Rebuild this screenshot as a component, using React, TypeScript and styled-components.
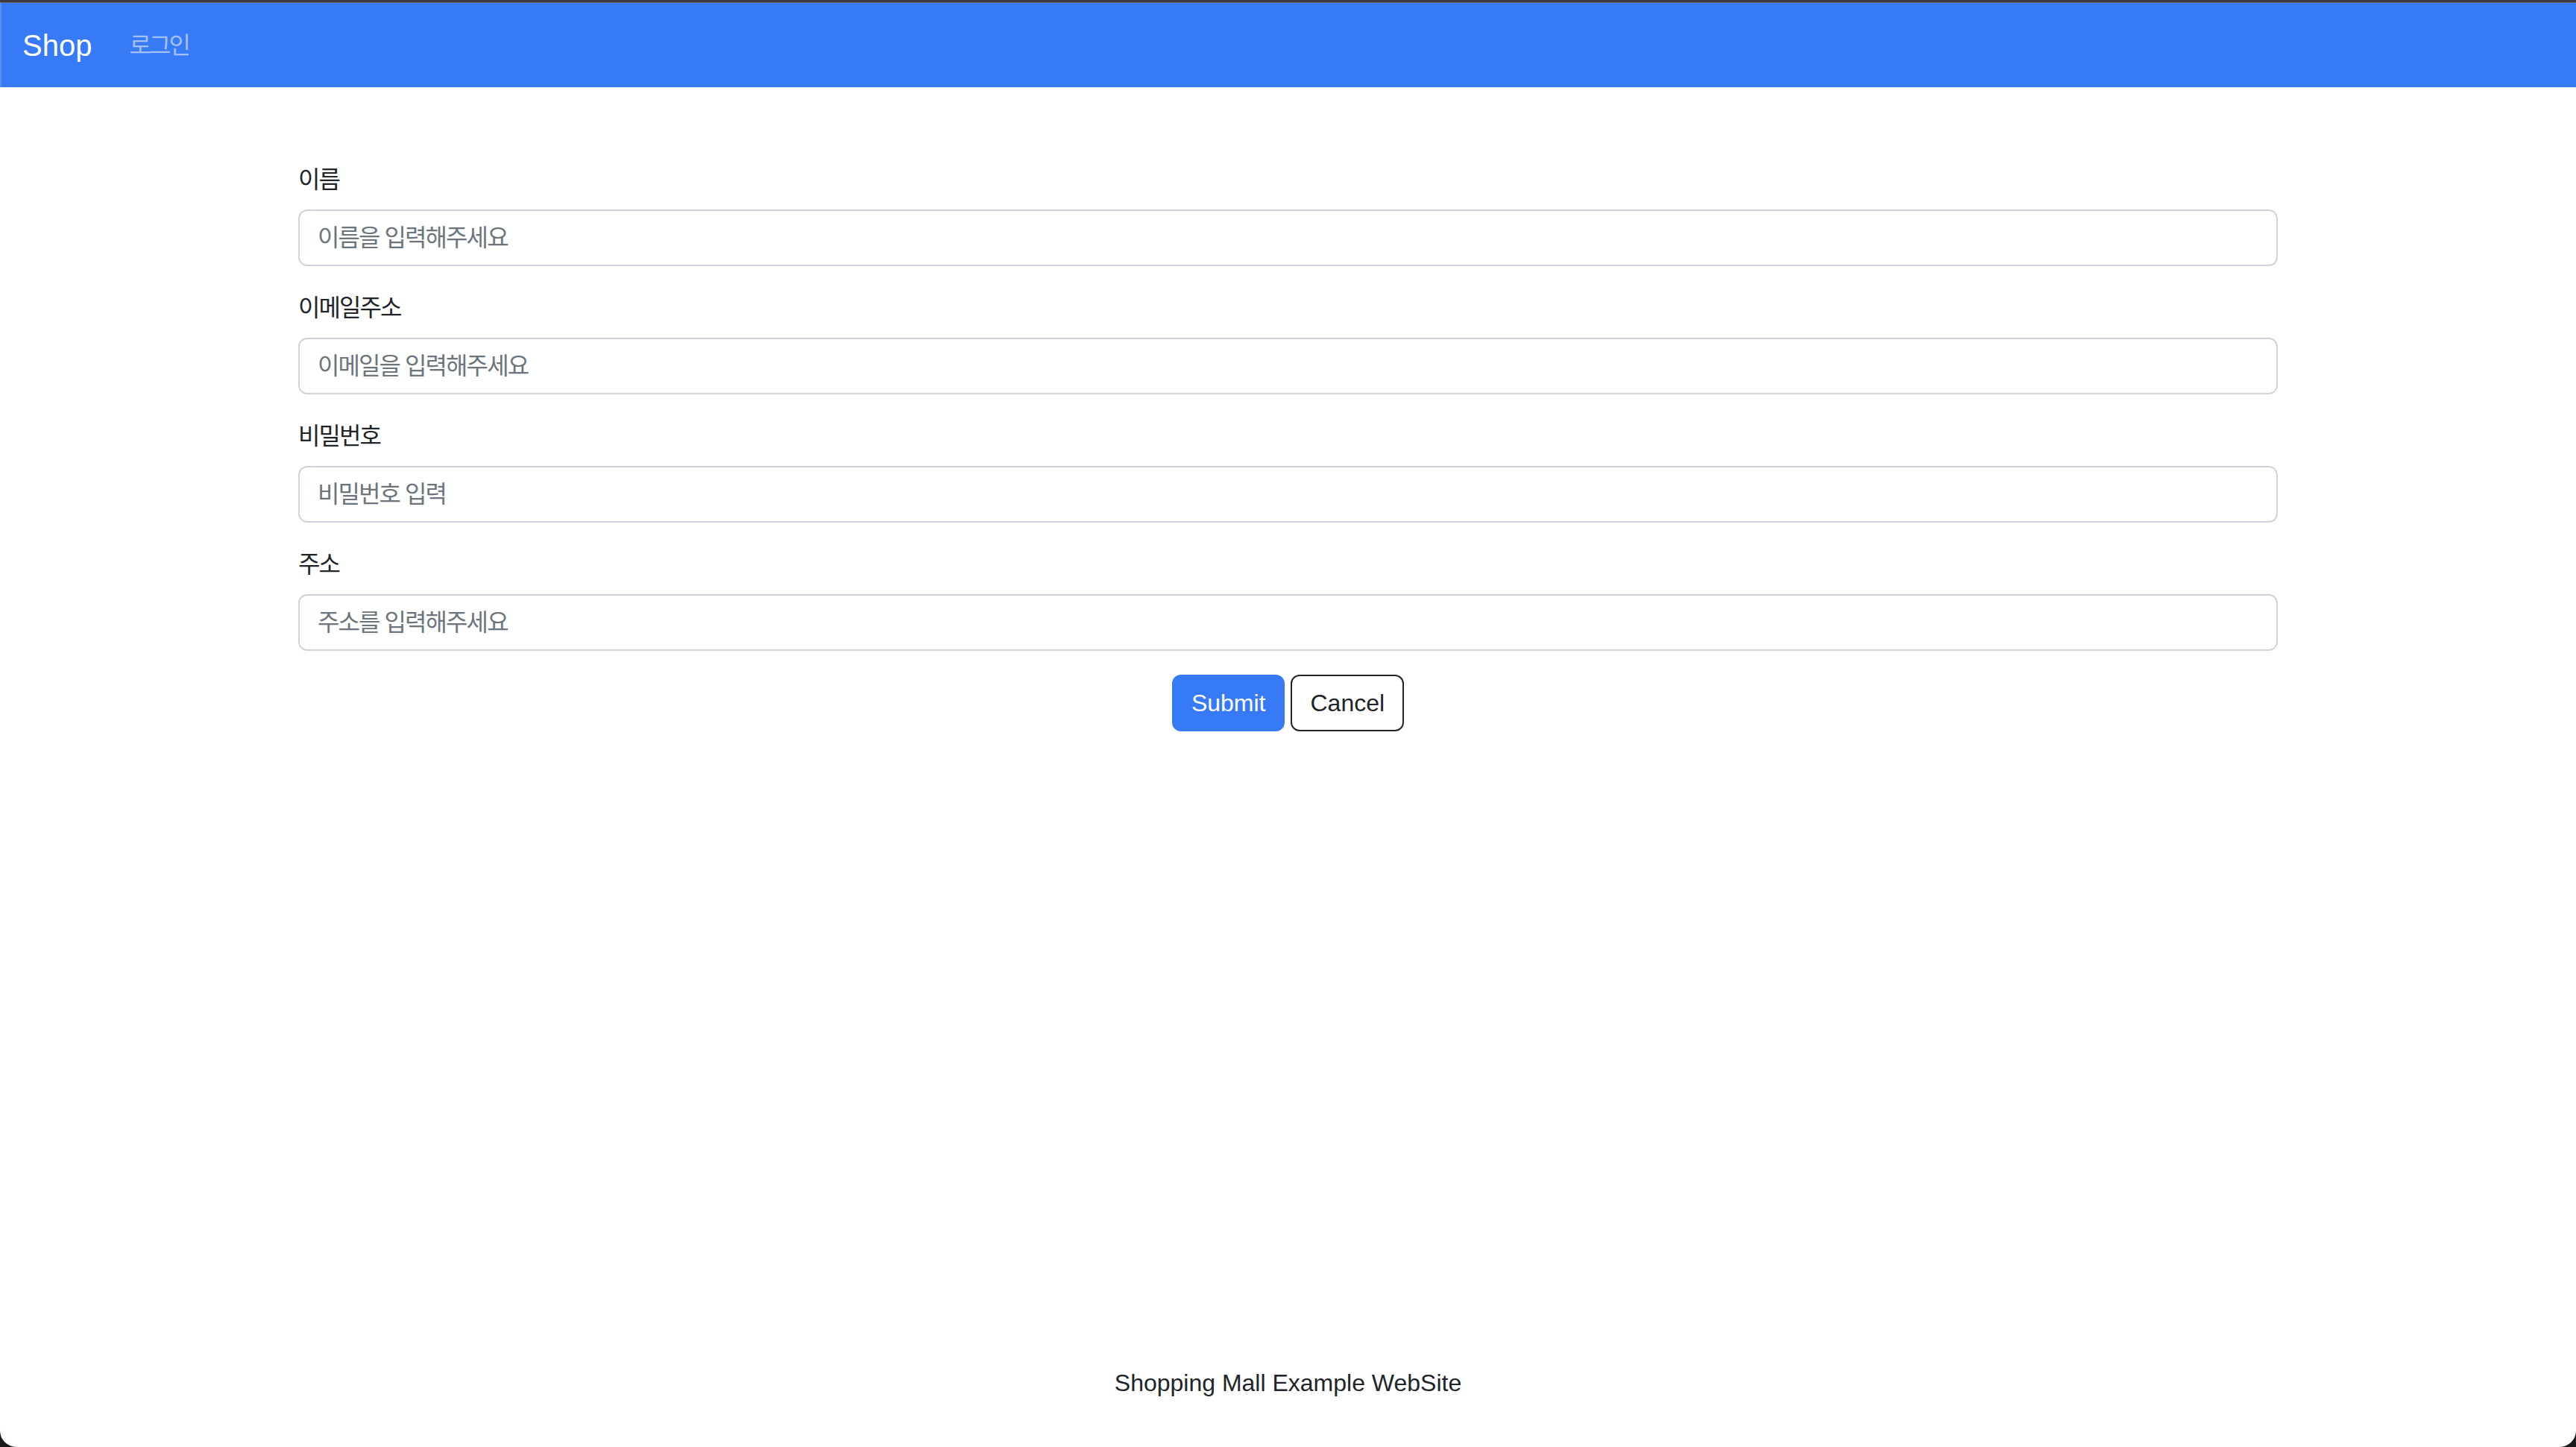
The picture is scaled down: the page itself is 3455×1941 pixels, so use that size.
import React from "react";
import styled, { createGlobalStyle } from "styled-components";

const GlobalStyle = createGlobalStyle`
  html, body {
    margin: 0;
    padding: 0;
    background: #1c1a18;
  }
  * { box-sizing: border-box; }
`;

const FONT = `"Liberation Sans", "Noto Sans CJK KR", "Noto Sans", sans-serif`;

const Window = styled.div`
  min-height: 100vh;
  display: flex;
  flex-direction: column;
  background: #ffffff;
  border-top: 3px solid #3b3b3d;
  border-radius: 0 0 22px 22px;
  overflow: hidden;
  font-family: ${FONT};
  color: #212529;
`;

const Navbar = styled.nav`
  height: 114px;
  display: flex;
  align-items: center;
  padding: 0 28px;
  background: #377af5;
  border-top: 1px solid #6d6d70;
  border-left: 2px solid #5b8ff3;
`;

const Brand = styled.a`
  font-size: 40px;
  line-height: 60px;
  color: #ffffff;
  text-decoration: none;
  margin-right: 50px;
`;

const NavLink = styled.a`
  font-size: 32px;
  line-height: 48px;
  letter-spacing: -0.09em;
  color: rgba(255, 255, 255, 0.55);
  text-decoration: none;
`;

const Main = styled.main`
  width: 2655px;
  margin: 100px auto 0;
`;

const Group = styled.div`
  margin-bottom: 32px;
`;

const Label = styled.label`
  display: block;
  font-size: 32px;
  line-height: 48px;
  letter-spacing: -0.06em;
  margin-bottom: 16px;
  color: #212529;
`;

const Input = styled.input`
  display: block;
  width: 100%;
  height: 76px;
  padding: 12px 24px;
  border: 2px solid #ced4da;
  border-radius: 12px;
  font-family: ${FONT};
  font-size: 32px;
  line-height: 48px;
  letter-spacing: -0.06em;
  color: #212529;
  background: #ffffff;
  outline: none;

  &::placeholder {
    color: #6c757d;
    opacity: 1;
  }
`;

const Actions = styled.div`
  display: flex;
  justify-content: center;
  gap: 8px;
`;

const Button = styled.button<{ $variant: "primary" | "outline" }>`
  height: 76px;
  padding: 12px 24px;
  border-radius: 12px;
  font-family: ${FONT};
  font-size: 32px;
  line-height: 48px;
  cursor: pointer;
  border: 2px solid ${(p) => (p.$variant === "primary" ? "#377af5" : "#212529")};
  background: ${(p) => (p.$variant === "primary" ? "#377af5" : "#ffffff")};
  color: ${(p) => (p.$variant === "primary" ? "#ffffff" : "#212529")};
`;

const Footer = styled.footer`
  margin-top: auto;
  padding: 32px 0 62px;
  text-align: center;
  font-size: 32px;
  line-height: 48px;
  color: #212529;
`;

const fields = [
  { id: "name", label: "이름", placeholder: "이름을 입력해주세요", type: "text" },
  { id: "email", label: "이메일주소", placeholder: "이메일을 입력해주세요", type: "email" },
  { id: "password", label: "비밀번호", placeholder: "비밀번호 입력", type: "password" },
  { id: "address", label: "주소", placeholder: "주소를 입력해주세요", type: "text" },
];

export default function App() {
  return (
    <>
      <GlobalStyle />
      <Window>
        <Navbar>
          <Brand href="#">Shop</Brand>
          <NavLink href="#">로그인</NavLink>
        </Navbar>
        <Main>
          <form onSubmit={(e) => e.preventDefault()}>
            {fields.map((f) => (
              <Group key={f.id}>
                <Label htmlFor={f.id}>{f.label}</Label>
                <Input id={f.id} type={f.type} placeholder={f.placeholder} />
              </Group>
            ))}
            <Actions>
              <Button type="submit" $variant="primary">Submit</Button>
              <Button type="button" $variant="outline">Cancel</Button>
            </Actions>
          </form>
        </Main>
        <Footer>Shopping Mall Example WebSite</Footer>
      </Window>
    </>
  );
}
